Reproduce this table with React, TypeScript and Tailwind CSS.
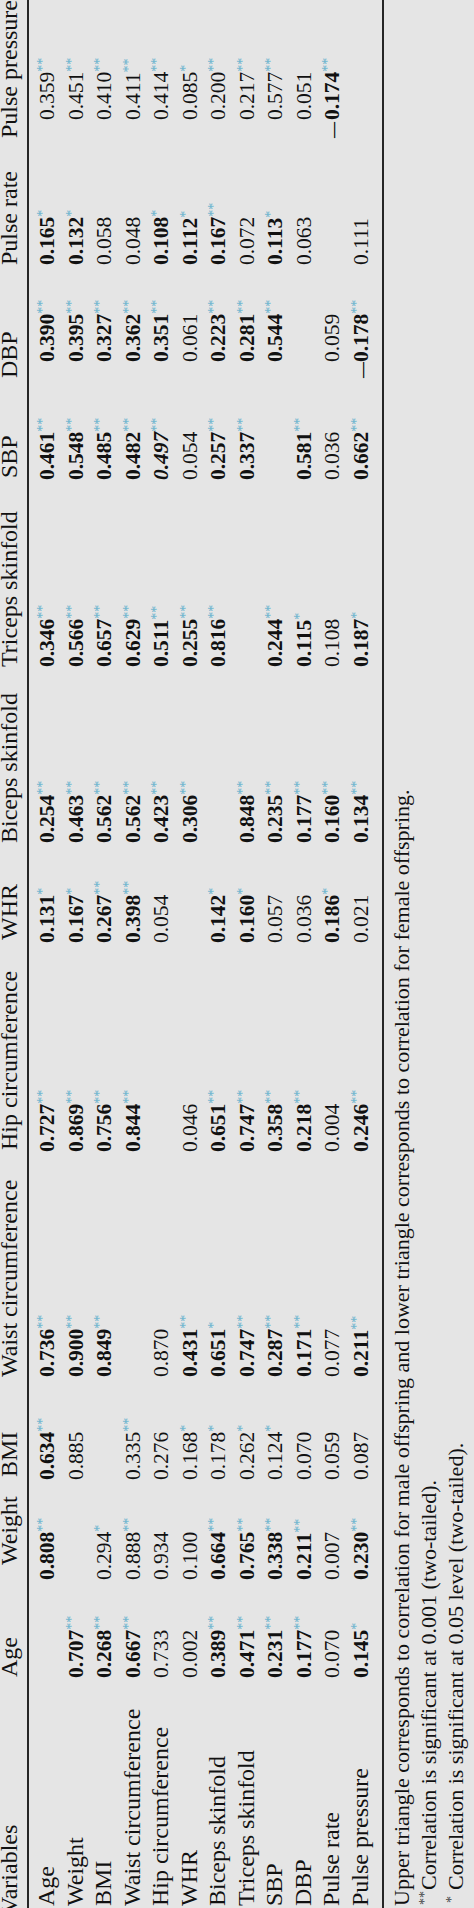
import React from "react";

const GRID =
  "grid grid-cols-[230px_98px_100px_103px_225px_209px_100px_176px_187px_102px_113px_127px_300px]";

type Col = { name: string; h: string; n: string; minus: string };

const cols: Col[] = [
  { name: "Age", h: "pl-[1px]", n: "", minus: "" },
  { name: "Weight", h: "pl-[15px]", n: "", minus: "" },
  { name: "BMI", h: "pl-[3px]", n: "", minus: "" },
  { name: "Waist circumference", h: "", n: "", minus: "" },
  { name: "Hip circumference", h: "pl-[2px]", n: "", minus: "" },
  { name: "WHR", h: "pl-[3px]", n: "", minus: "" },
  { name: "Biceps skinfold", h: "", n: "", minus: "" },
  { name: "Triceps skinfold", h: "", n: "", minus: "" },
  { name: "SBP", h: "pl-[2px]", n: "", minus: "" },
  { name: "DBP", h: "", n: "pl-[16px]", minus: "inline-block w-[16px] -ml-[16px]" },
  { name: "Pulse rate", h: "", n: "", minus: "" },
  { name: "Pulse pressure", h: "", n: "pl-[18px]", minus: "inline-block w-[18px] -ml-[18px]" },
];

const rows: { label: string; cells: string[] }[] = [
  { label: "Age", cells: ["", "B0.808**", "B0.634**", "B0.736**", "B0.727**", "B0.131*", "B0.254**", "B0.346**", "B0.461**", "B0.390**", "B0.165*", "0.359**"] },
  { label: "Weight", cells: ["B0.707**", "", "0.885", "B0.900**", "B0.869**", "B0.167*", "B0.463**", "B0.566**", "B0.548**", "B0.395**", "B0.132*", "0.451**"] },
  { label: "BMI", cells: ["B0.268**", "0.294*", "", "B0.849**", "B0.756**", "B0.267**", "B0.562**", "B0.657**", "B0.485**", "B0.327**", "0.058", "0.410**"] },
  { label: "Waist circumference", cells: ["B0.667**", "0.888**", "0.335**", "", "B0.844**", "B0.398**", "B0.562**", "B0.629**", "B0.482**", "B0.362**", "0.048", "0.411**"] },
  { label: "Hip circumference", cells: ["0.733", "0.934", "0.276", "0.870", "", "0.054", "B0.423**", "B0.511**", "BI0.497**", "B0.351**", "B0.108*", "0.414**"] },
  { label: "WHR", cells: ["0.002", "0.100", "0.168*", "B0.431**", "0.046", "", "B0.306**", "B0.255**", "0.054", "0.061", "B0.112*", "0.085*"] },
  { label: "Biceps skinfold", cells: ["B0.389**", "B0.664**", "0.178*", "B0.651*", "B0.651**", "B0.142*", "", "B0.816**", "B0.257**", "B0.223**", "B0.167**", "0.200**"] },
  { label: "Triceps skinfold", cells: ["B0.471**", "B0.765**", "0.262*", "B0.747**", "B0.747**", "B0.160*", "B0.848**", "", "B0.337**", "B0.281**", "0.072", "0.217**"] },
  { label: "SBP", cells: ["B0.231**", "B0.338**", "0.124*", "B0.287**", "B0.358**", "0.057", "B0.235**", "B0.244**", "", "B0.544**", "B0.113*", "0.577**"] },
  { label: "DBP", cells: ["B0.177**", "B0.211**", "0.070", "B0.171**", "B0.218**", "0.036", "B0.177**", "B0.115*", "B0.581**", "", "0.063", "0.051"] },
  { label: "Pulse rate", cells: ["0.070", "0.007", "0.059", "0.077", "0.004", "B0.186*", "B0.160**", "0.108", "0.036", "0.059", "", "B-0.174**"] },
  { label: "Pulse pressure", cells: ["B0.145*", "B0.230**", "0.087", "B0.211**", "B0.246**", "0.021", "B0.134**", "B0.187*", "B0.662**", "B-0.178**", "0.111", ""] },
];

function NumCell({ raw, col }: { raw: string; col: Col }) {
  if (!raw) return <div className={col.n} />;
  let s = raw;
  let bold = false;
  let italic = false;
  if (s.startsWith("B")) {
    bold = true;
    s = s.slice(1);
  }
  if (s.startsWith("I")) {
    italic = true;
    s = s.slice(1);
  }
  const m = s.match(/^(-?)([0-9.]+)(\**)$/);
  const neg = m ? m[1] === "-" : false;
  const num = m ? m[2] : s;
  const stars = m ? m[3] : "";
  return (
    <div className={col.n}>
      {neg && <span className={col.minus + " text-[16px] leading-none font-bold"}>—</span>}
      <span className={"text-[21.5px] leading-none " + (bold ? "font-bold" : "font-normal") + (italic ? " italic" : "")}>{num}</span>
      {stars && (
        <span className="text-[14px] leading-none align-[7px] text-[#5fafcc] font-normal">{stars}</span>
      )}
    </div>
  );
}

export default function App() {
  return (
    <div className="w-[474px] h-[1908px] overflow-hidden bg-[#e5e5e5]">
      <div className="w-[1908px] h-[474px] origin-top-left -rotate-90 translate-y-[1908px] font-['Liberation_Serif',serif] text-[24px] text-[#111]">
        <div className={GRID + " h-[29px] border-b-2 border-[#262626] leading-[18px] whitespace-nowrap"}>
          <div className="-ml-[6px]">Variables</div>
          {cols.map((c) => (
            <div key={c.name} className={c.h}>
              {c.name}
            </div>
          ))}
        </div>
        <div className={GRID + " pt-[3px] pb-[8px] border-b-2 border-[#262626] leading-[28.5px] whitespace-nowrap"}>
          {rows.map((r) => (
            <React.Fragment key={r.label}>
              <div className="pl-[2px]">{r.label}</div>
              {r.cells.map((c, i) => (
                <NumCell key={i} raw={c} col={cols[i]} />
              ))}
            </React.Fragment>
          ))}
        </div>
        <div className="pt-[4px] pl-[2px] text-[22px] leading-[27px] whitespace-nowrap">
          <div>
            Upper triangle corresponds to correlation for male offspring and lower triangle corresponds to correlation for female offspring.
          </div>
          <div>
            <span className="inline-block w-[16px] pl-[1px] text-[14px] leading-none align-[7px] text-[#444]">**</span>
            Correlation is significant at 0.001 (two-tailed).
          </div>
          <div>
            <span className="inline-block w-[16px] pl-[3px] text-[14px] leading-none align-[7px] text-[#444]">*</span>
            Correlation is significant at 0.05 level (two-tailed).
          </div>
        </div>
      </div>
    </div>
  );
}
